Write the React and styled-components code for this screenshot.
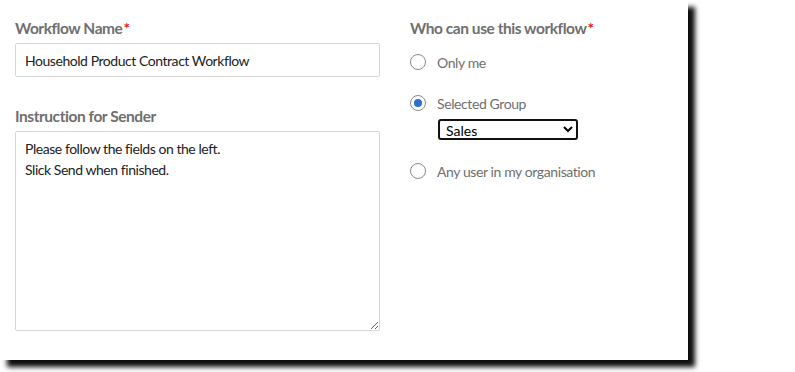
import React from "react";
import styled, { createGlobalStyle } from "styled-components";

const GlobalStyle = createGlobalStyle`
  body {
    margin: 0;
    background: #ffffff;
    font-family: Lato, "Noto Sans", sans-serif;
  }
`;

const App = () => {
  return (
    <>
      <GlobalStyle />
      <Page>
        <Panel>
          <Column>
            <Field>
              <Label>
                Workflow Name<Required>*</Required>
              </Label>
              <TextInput defaultValue="Household Product Contract Workflow" />
            </Field>
            <Field>
              <Label>Instruction for Sender</Label>
              <TextArea
                defaultValue={
                  "Please follow the fields on the left.\nSlick Send when finished."
                }
              />
            </Field>
          </Column>
          <RightColumn>
            <Label>
              Who can use this workflow<Required>*</Required>
            </Label>
            <Options>
              <Option>
                <Radio type="radio" name="who" />
                <OptionText>Only me</OptionText>
              </Option>
              <Group>
                <Option>
                  <Radio type="radio" name="who" defaultChecked />
                  <OptionText>Selected Group</OptionText>
                </Option>
                <Select defaultValue="Sales">
                  <option>Sales</option>
                  <option>Marketing</option>
                  <option>Legal</option>
                </Select>
              </Group>
              <Option>
                <Radio type="radio" name="who" />
                <OptionText>Any user in my organisation</OptionText>
              </Option>
            </Options>
          </RightColumn>
        </Panel>
      </Page>
    </>
  );
};

const Page = styled.div`
  width: 795px;
  height: 372px;
  overflow: hidden;
`;

const Panel = styled.div`
  width: 688px;
  height: 360px;
  box-sizing: border-box;
  background: #ffffff;
  box-shadow: 7px 7px 5px rgba(0, 0, 0, 0.95);
  padding: 18px 15px 0 15px;
  display: flex;
  gap: 30px;
`;

const Column = styled.div`
  width: 365px;
  display: flex;
  flex-direction: column;
  gap: 29px;
`;

const RightColumn = styled.div`
  flex: 1;
  display: flex;
  flex-direction: column;
`;

const Field = styled.div`
  display: flex;
  flex-direction: column;
`;

const Label = styled.div`
  font-size: 15.5px;
  font-weight: 700;
  color: #6f6f6f;
  line-height: 20px;
  margin-bottom: 5px;
  letter-spacing: -0.45px;
`;

const Required = styled.span`
  color: #e0182d;
  margin-left: 1px;
`;

const TextInput = styled.input`
  height: 34px;
  box-sizing: border-box;
  border: 1px solid #d6d6d6;
  border-radius: 2px;
  padding: 0 9px;
  font-family: inherit;
  font-size: 14px;
  letter-spacing: -0.45px;
  color: #222222;
  outline: none;
`;

const TextArea = styled.textarea`
  height: 200px;
  box-sizing: border-box;
  border: 1px solid #d6d6d6;
  border-radius: 2px;
  padding: 6px 9px;
  font-family: inherit;
  font-size: 14px;
  letter-spacing: -0.45px;
  line-height: 21px;
  color: #222222;
  outline: none;
`;

const Options = styled.div`
  display: flex;
  flex-direction: column;
  gap: 21px;
  margin-top: 9px;
`;

const Group = styled.div`
  display: flex;
  flex-direction: column;
  gap: 6px;
`;

const Option = styled.label`
  display: flex;
  align-items: center;
  gap: 11px;
  height: 20px;
`;

const Radio = styled.input`
  appearance: none;
  margin: 0;
  width: 16px;
  height: 16px;
  border: 1px solid #8a8a8a;
  border-radius: 50%;
  background: #ffffff;
  display: grid;
  place-items: center;

  &:checked::after {
    content: "";
    width: 8px;
    height: 8px;
    border-radius: 50%;
    background: #2d6fd1;
  }
`;

const OptionText = styled.span`
  font-size: 14px;
  letter-spacing: -0.4px;
  color: #6f6f6f;
`;

const Select = styled.select`
  margin-left: 28px;
  width: 140px;
  height: 21px;
  border: 2px solid #111111;
  border-radius: 3px;
  font-family: inherit;
  font-size: 14px;
  color: #000000;
  background: #ffffff;
  padding: 0 2px;
`;

export default App;
